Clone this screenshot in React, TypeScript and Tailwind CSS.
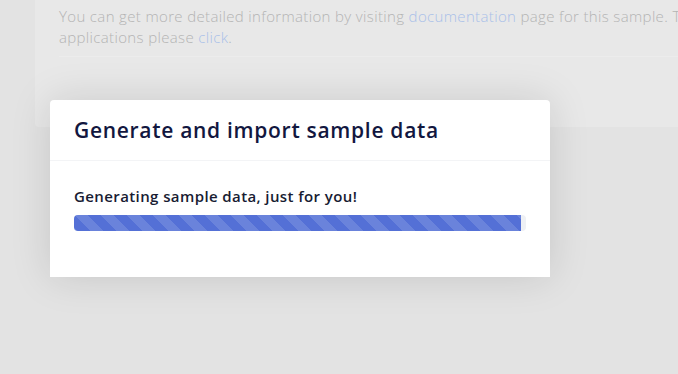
import React from "react";

const font = { fontFamily: "'Open Sans', 'Liberation Sans', sans-serif" };

function BackgroundPage() {
  return (
    <div className="flex h-full">
      <div className="w-[35px] shrink-0 bg-[#e3e3e3]" />
      <div className="flex-1 min-w-0">
        <div className="bg-[#e8e8e8] rounded-bl-[4px] h-[127px] pl-[24px] overflow-hidden">
          <div className="pt-[6px] text-[15px] tracking-[0.35px] leading-[21px] text-[#b4b4b4] font-light whitespace-nowrap">
            <p>
              You can get more detailed information by visiting{" "}
              <span className="text-[#a8c0e8]">documentation</span> page for this sample. To see other
            </p>
            <p>
              applications please <span className="text-[#a8c0e8]">click</span>.
            </p>
          </div>
          <div className="mt-[8px] border-t border-[#ececec]" />
          <div className="flex justify-end pt-[9px] text-[14px] text-[#a8c0e8] whitespace-nowrap">
            <span className="-mr-[6px]">c</span>
          </div>
        </div>
      </div>
    </div>
  );
}

function ProgressBar({ value }: { value: number }) {
  return (
    <div className="h-4 rounded-[4px] bg-[#eef0f4] overflow-hidden">
      <div
        className="h-full bg-[#5470d6] bg-[linear-gradient(45deg,rgba(255,255,255,0.13)_25%,transparent_25%,transparent_50%,rgba(255,255,255,0.13)_50%,rgba(255,255,255,0.13)_75%,transparent_75%,transparent)] bg-size-[26px_26px]"
        style={{ width: `${value}%` }}
      />
    </div>
  );
}

export default function App() {
  return (
    <div className="relative w-[678px] h-[374px] overflow-hidden bg-[#e3e3e3]" style={font}>
      <BackgroundPage />
      <div className="absolute left-[50px] top-[100px] w-[500px] bg-white rounded-t-[4px] shadow-[0_0_40px_rgba(0,0,0,0.13)]">
        <div className="h-[61px] px-6 flex items-center border-b border-[#f3f4f6]">
          <h3 className="text-[21px] tracking-[0.7px] font-semibold text-[#12173f] pt-[1px] whitespace-nowrap">
            Generate and import sample data
          </h3>
        </div>
        <div className="px-6 pt-[24px] pb-[46px]">
          <p className="text-[15px] tracking-[0.4px] font-semibold text-[#181c32] leading-[22px] mb-[8px]">
            Generating sample data, just for you!
          </p>
          <ProgressBar value={98.9} />
        </div>
      </div>
    </div>
  );
}
